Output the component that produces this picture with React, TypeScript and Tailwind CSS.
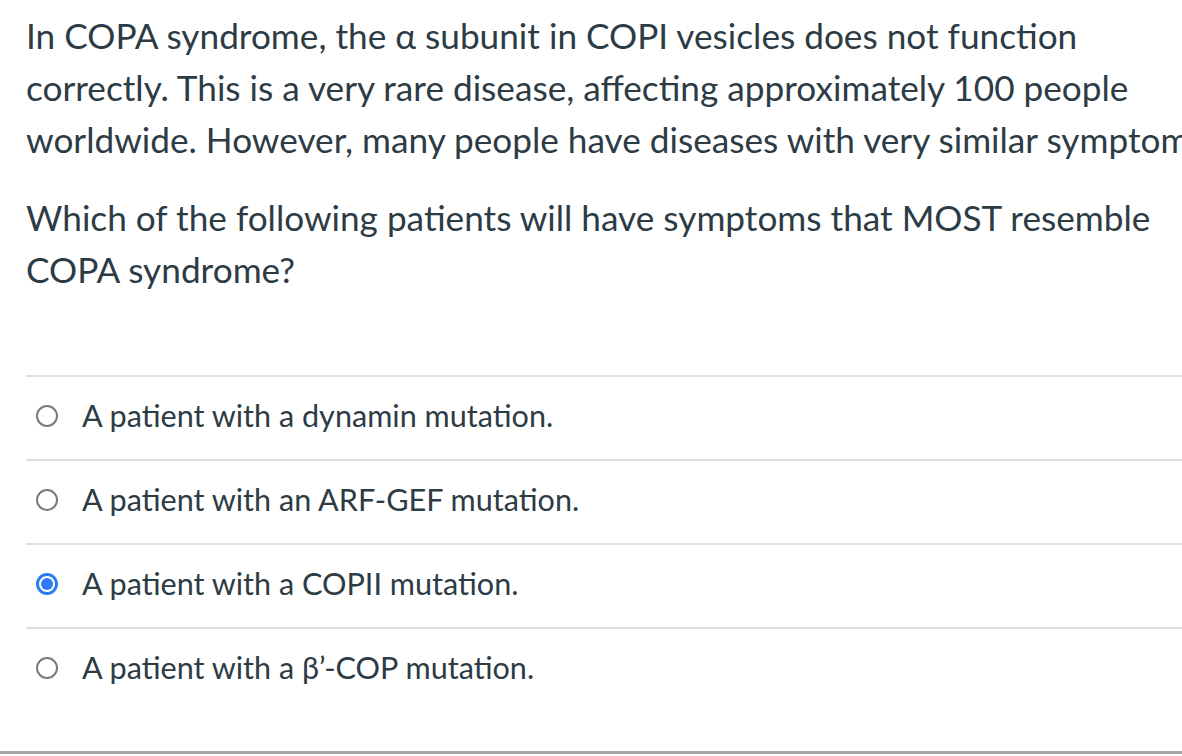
import { useState } from 'react';

const OPTIONS = [
  'A patient with a dynamin mutation.',
  'A patient with an ARF-GEF mutation.',
  'A patient with a COPII mutation.',
  'A patient with a β’-COP mutation.',
];

function Radio({ checked }: { checked: boolean }) {
  if (checked) {
    return (
      <span className="flex h-[22px] w-[22px] shrink-0 items-center justify-center rounded-full border-[3px] border-[#2b7cf6] bg-white">
        <span className="h-[12px] w-[12px] rounded-full bg-[#2b7cf6]" />
      </span>
    );
  }
  return <span className="h-[22px] w-[22px] shrink-0 rounded-full border-2 border-[#7a7a7a] bg-white" />;
}

export default function App() {
  const [selected, setSelected] = useState(2);
  return (
    <div className="h-[756px] w-[1182px] overflow-hidden bg-white font-['Lato',sans-serif] text-[#2d3b45]">
      <div className="pl-[26px] pt-[9px] whitespace-nowrap">
        <p className="text-[35.2px] leading-[52px]">
          In COPA syndrome, the α subunit in COPI vesicles does not function
          <br />
          correctly. This is a very rare disease, affecting approximately 100 people
          <br />
          worldwide. However, many people have diseases with very similar symptoms.
        </p>
        <p className="mt-[26px] text-[35.2px] leading-[52px]">
          Which of the following patients will have symptoms that MOST resemble
          <br />
          COPA syndrome?
        </p>
      </div>
      <div className="ml-[26px] mt-[80px]">
        {OPTIONS.map((text, i) => (
          <label
            key={text}
            onClick={() => setSelected(i)}
            className="flex h-[84px] cursor-pointer items-center gap-[24px] border-t-2 border-[#e0e0e0] pb-[4px] pl-[10px]"
          >
            <Radio checked={selected === i} />
            <span className="text-[30.6px]">{text}</span>
          </label>
        ))}
      </div>
      <div className="mt-[40px] h-[3px] bg-[#a5a5a5]" />
    </div>
  );
}
